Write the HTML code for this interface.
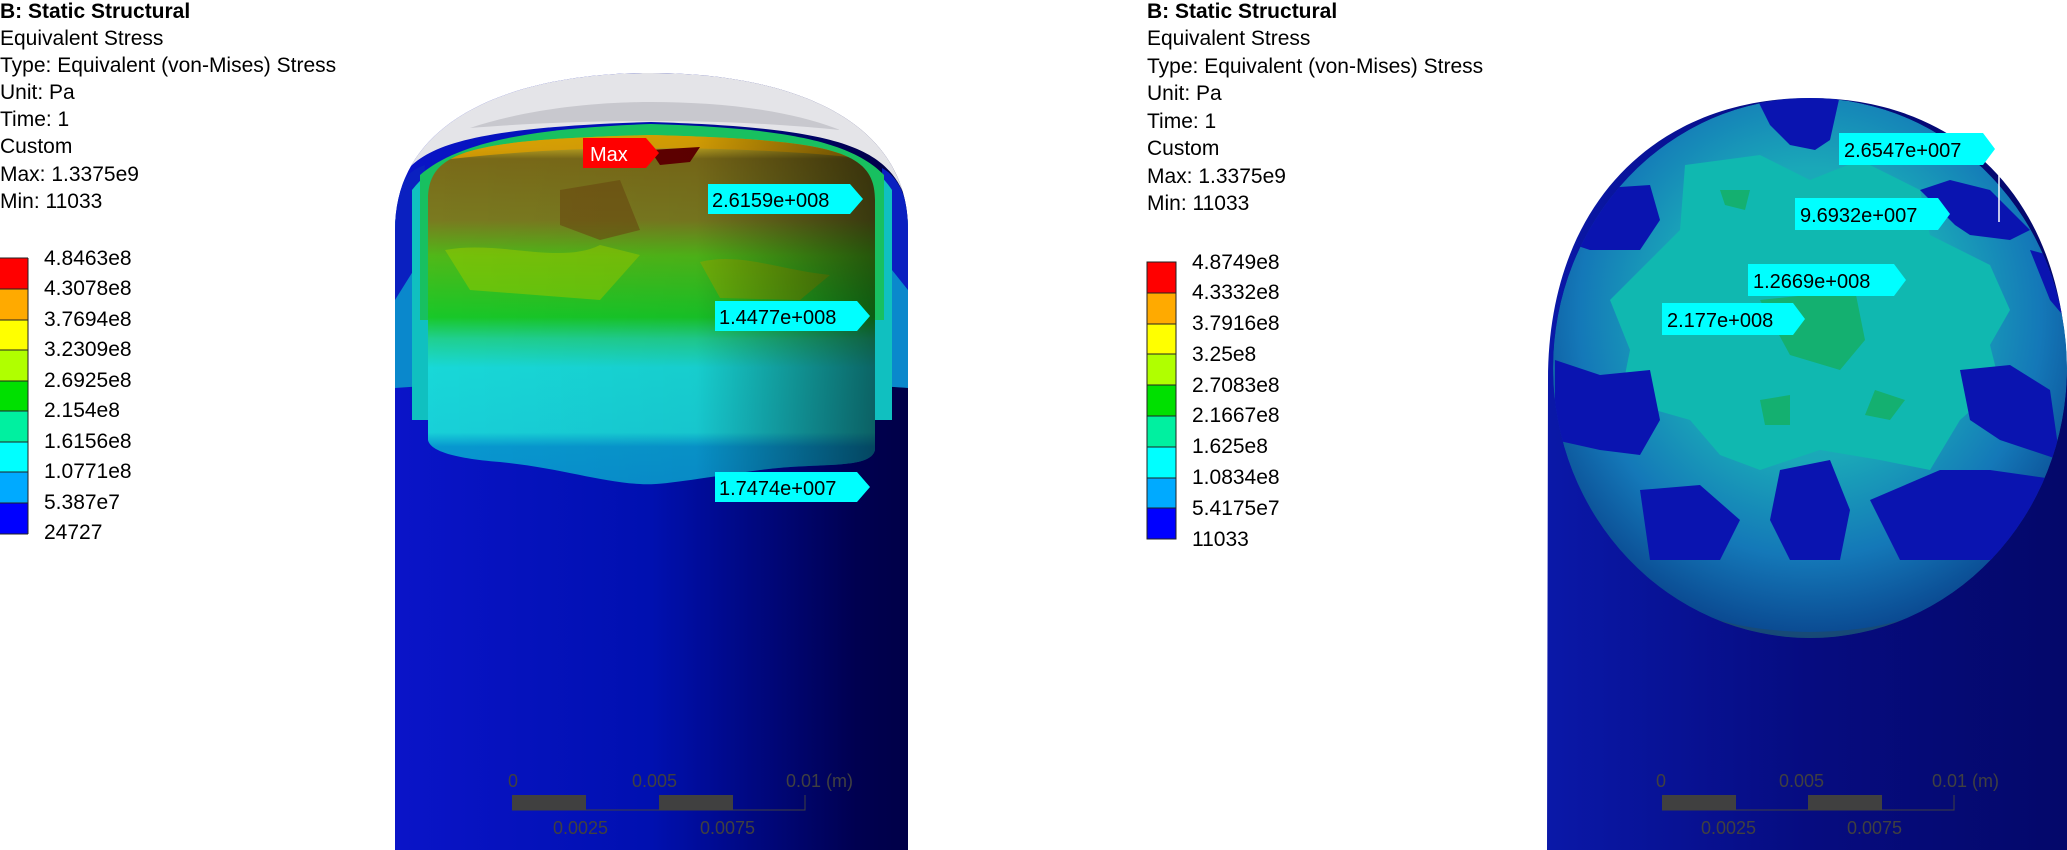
<!DOCTYPE html>
<html><head><meta charset="utf-8"><style>
html,body{margin:0;padding:0;background:#fff;width:2067px;height:850px;overflow:hidden}
svg{display:block}
text{font-family:"Liberation Sans",sans-serif}
</style></head><body>
<svg width="2067" height="850" viewBox="0 0 2067 850" xmlns="http://www.w3.org/2000/svg">
<defs>
<linearGradient id="cylL" x1="0" x2="1" y1="0" y2="0">
<stop offset="0" stop-color="#0a14c8"/><stop offset="0.5" stop-color="#0010b0"/><stop offset="0.9" stop-color="#000050"/><stop offset="1" stop-color="#000048"/>
</linearGradient>
<linearGradient id="shadeR" x1="0" x2="1" y1="0" y2="0">
<stop offset="0" stop-color="#000" stop-opacity="0"/><stop offset="0.6" stop-color="#000" stop-opacity="0.05"/><stop offset="1" stop-color="#000" stop-opacity="0.55"/>
</linearGradient>
<linearGradient id="innerL" x1="0" x2="0" y1="0" y2="1">
<stop offset="0" stop-color="#d0c000"/><stop offset="0.05" stop-color="#b8a020"/><stop offset="0.08" stop-color="#7a6a18"/>
<stop offset="0.25" stop-color="#7a7a20"/><stop offset="0.35" stop-color="#50b818"/><stop offset="0.52" stop-color="#18c828"/>
<stop offset="0.58" stop-color="#20d090"/><stop offset="0.66" stop-color="#18d8d8"/><stop offset="0.84" stop-color="#18d0d8"/>
<stop offset="0.88" stop-color="#0898d0"/><stop offset="1" stop-color="#0890d0"/>
</linearGradient>
<radialGradient id="domeR" cx="0.5" cy="0.4" r="0.6">
<stop offset="0" stop-color="#22b8b0"/><stop offset="0.45" stop-color="#1aa8b8"/><stop offset="0.75" stop-color="#1478b8"/><stop offset="1" stop-color="#0a4890"/>
</radialGradient>
<linearGradient id="cylR" x1="0" x2="1" y1="0" y2="0">
<stop offset="0" stop-color="#0a18a8"/><stop offset="0.5" stop-color="#060c80"/><stop offset="1" stop-color="#04086a"/>
</linearGradient>
<clipPath id="cl"><path d="M395,850 L395,230 C395,115 520,73 651,73 C782,73 908,115 908,230 L908,850 Z"/></clipPath>
<clipPath id="ci"><path d="M428,200 C428,150 470,140 651,135 C832,140 875,150 875,200 L875,450 C870,470 820,462 760,470 C700,478 660,486 640,484 C600,482 560,468 500,462 C450,458 430,450 428,440 Z"/></clipPath>
<clipPath id="cr"><ellipse cx="1810" cy="368" rx="257" ry="270"/></clipPath>
</defs>

<!-- LEFT TEXT -->
<g font-size="21" fill="#000">
<text x="0" y="18" font-weight="bold">B: Static Structural</text>
<text x="0" y="45">Equivalent Stress</text>
<text x="0" y="72">Type: Equivalent (von-Mises) Stress</text>
<text x="0" y="99">Unit: Pa</text>
<text x="0" y="126">Time: 1</text>
<text x="0" y="153">Custom</text>
<text x="0" y="181">Max: 1.3375e9</text>
<text x="0" y="208">Min: 11033</text>
</g>
<g>
<rect x="0" y="258" width="28" height="31" fill="#ff0000"/>
<rect x="0" y="289" width="28" height="31" fill="#ffaa00"/>
<rect x="0" y="320" width="28" height="30" fill="#ffff00"/>
<rect x="0" y="350" width="28" height="31" fill="#b0ff00"/>
<rect x="0" y="381" width="28" height="30" fill="#00e000"/>
<rect x="0" y="411" width="28" height="31" fill="#00f0a0"/>
<rect x="0" y="442" width="28" height="30" fill="#00ffff"/>
<rect x="0" y="472" width="28" height="31" fill="#00aaff"/>
<rect x="0" y="503" width="28" height="31" fill="#0000ff"/>
<path d="M0,289H28M0,320H28M0,350H28M0,381H28M0,411H28M0,442H28M0,472H28M0,503H28M28,258V534M0,258H28M0,534H28" stroke="#222" stroke-width="1" fill="none"/>
</g>
<g font-size="21" fill="#000">
<text x="44" y="265">4.8463e8</text><text x="44" y="295">4.3078e8</text><text x="44" y="326">3.7694e8</text>
<text x="44" y="356">3.2309e8</text><text x="44" y="387">2.6925e8</text><text x="44" y="417">2.154e8</text>
<text x="44" y="448">1.6156e8</text><text x="44" y="478">1.0771e8</text><text x="44" y="509">5.387e7</text>
<text x="44" y="539">24727</text>
</g>

<!-- LEFT MODEL -->
<g clip-path="url(#cl)">
<rect x="395" y="60" width="513" height="800" fill="url(#cylL)"/>
<path d="M395,220 C410,160 470,132 651,127 C830,132 890,160 908,220 L908,388 C800,380 500,380 395,388 Z" fill="#0a88cc"/>
<path d="M395,200 C400,180 410,170 425,165 L420,260 L395,300Z" fill="#0a20c0"/>
<path d="M908,215 C905,190 895,175 882,168 L884,260 L908,290Z" fill="#0a20c0"/>
<path d="M412,190 C450,142 520,130 651,125 C790,130 860,142 892,190 L892,420 L412,420Z" fill="#10c0c0"/>
<path d="M420,175 C460,140 540,128 651,124 C780,128 850,140 884,175 L884,320 L420,320Z" fill="#18c060"/>
<g clip-path="url(#ci)">
<rect x="420" y="130" width="460" height="360" fill="url(#innerL)"/>
<path d="M428,150 C520,138 600,134 651,134 C720,136 800,140 875,155 L875,160 C800,150 700,148 651,148 C580,148 500,152 428,162Z" fill="#e0a000" opacity="0.8"/>
<path d="M650,150 L700,147 L690,162 L660,165Z" fill="#600000"/>
<path d="M445,250 C500,240 560,265 600,245 L640,255 L600,300 L470,290Z" fill="#90c800" opacity="0.6"/>
<path d="M700,262 C740,252 780,270 830,275 L800,300 L720,298Z" fill="#90b000" opacity="0.6"/>
<path d="M560,190 L620,180 L640,230 L600,240 L560,225Z" fill="#6a4a10" opacity="0.6"/>
<rect x="420" y="120" width="460" height="380" fill="url(#shadeR)"/>
</g>
<!-- gray cap -->
<path d="M395,190 C405,100 520,73 651,73 C782,73 900,100 908,205 C890,150 850,128 651,122 C450,128 412,150 395,190Z" fill="#e4e4e8"/>
<path d="M470,128 C530,108 600,102 651,102 C720,102 790,110 840,130 C780,124 720,121 651,121 C580,121 520,124 470,128Z" fill="#c8c8ce"/>
</g>
<!-- left labels -->
<polygon points="583,138 646,138 659,153 646,168 583,168" fill="#ff0000"/>
<text x="590" y="161" font-size="20" fill="#fff">Max</text>
<polygon points="708,184 850,184 863,199 850,214 708,214" fill="#00ffff"/>
<text x="712" y="207" font-size="20" fill="#000">2.6159e+008</text>
<polygon points="715,301 857,301 870,316 857,331 715,331" fill="#00ffff"/>
<text x="719" y="324" font-size="20" fill="#000">1.4477e+008</text>
<polygon points="715,472 857,472 870,487 857,502 715,502" fill="#00ffff"/>
<text x="719" y="495" font-size="20" fill="#000">1.7474e+007</text>
<!-- left scale -->
<g font-size="18" fill="#404040">
<text x="508" y="787">0</text><text x="632" y="787">0.005</text><text x="786" y="787">0.01 (m)</text>
<text x="553" y="834">0.0025</text><text x="700" y="834">0.0075</text>
</g>
<rect x="512" y="795" width="74" height="15" fill="#404040"/>
<rect x="659" y="795" width="74" height="15" fill="#404040"/>
<path d="M512,810 H805 V795" stroke="#404040" stroke-width="1" fill="none"/>

<!-- RIGHT TEXT -->
<g font-size="21" fill="#000">
<text x="1147" y="18" font-weight="bold">B: Static Structural</text>
<text x="1147" y="45">Equivalent Stress</text>
<text x="1147" y="73">Type: Equivalent (von-Mises) Stress</text>
<text x="1147" y="100">Unit: Pa</text>
<text x="1147" y="128">Time: 1</text>
<text x="1147" y="155">Custom</text>
<text x="1147" y="183">Max: 1.3375e9</text>
<text x="1147" y="210">Min: 11033</text>
</g>
<g>
<rect x="1147" y="262" width="29" height="31" fill="#ff0000"/>
<rect x="1147" y="293" width="29" height="31" fill="#ffaa00"/>
<rect x="1147" y="324" width="29" height="30" fill="#ffff00"/>
<rect x="1147" y="354" width="29" height="31" fill="#b0ff00"/>
<rect x="1147" y="385" width="29" height="31" fill="#00e000"/>
<rect x="1147" y="416" width="29" height="31" fill="#00f0a0"/>
<rect x="1147" y="447" width="29" height="31" fill="#00ffff"/>
<rect x="1147" y="478" width="29" height="30" fill="#00aaff"/>
<rect x="1147" y="508" width="29" height="31" fill="#0000ff"/>
<path d="M1147,293h29M1147,324h29M1147,354h29M1147,385h29M1147,416h29M1147,447h29M1147,478h29M1147,508h29M1147,262h29v277h-29z" stroke="#222" stroke-width="1" fill="none"/>
</g>
<g font-size="21" fill="#000">
<text x="1192" y="269">4.8749e8</text><text x="1192" y="299">4.3332e8</text><text x="1192" y="330">3.7916e8</text>
<text x="1192" y="361">3.25e8</text><text x="1192" y="392">2.7083e8</text><text x="1192" y="422">2.1667e8</text>
<text x="1192" y="453">1.625e8</text><text x="1192" y="484">1.0834e8</text><text x="1192" y="515">5.4175e7</text>
<text x="1192" y="546">11033</text>
</g>

<!-- RIGHT MODEL -->
<path d="M1547,850 L1548,380 C1548,200 1660,98 1810,98 C1960,98 2067,200 2067,380 L2067,850 Z" fill="url(#cylR)"/>
<g clip-path="url(#cr)">
<ellipse cx="1810" cy="368" rx="257" ry="270" fill="url(#domeR)"/>
<path d="M1560,450 C1620,600 1700,630 1810,632 C1920,630 2000,600 2060,450 L2067,650 L1550,650Z" fill="#1a4a70" opacity="0.8"/>
<path d="M1685,165 L1760,155 L1810,180 L1860,160 L1920,190 L1930,235 L1990,265 L2010,310 L1990,345 L2000,385 L1960,420 L1930,470 L1880,460 L1820,450 L1760,470 L1720,455 L1690,420 L1620,400 L1630,350 L1610,300 L1650,260 L1680,230Z" fill="#10b8b0"/>
<path d="M1760,300 L1855,290 L1865,340 L1840,370 L1790,355Z" fill="#14b070"/>
<path d="M1720,190 L1750,190 L1745,210 L1725,205Z" fill="#14b070"/>
<path d="M1760,400 L1790,395 L1790,425 L1765,425Z" fill="#14b070"/>
<path d="M1875,390 L1905,400 L1890,420 L1865,415Z" fill="#14b070"/>
<g fill="#0a14b0">
<path d="M1755,95 L1840,95 L1830,140 L1815,150 L1790,145 L1770,125Z"/>
<path d="M1920,190 L1950,180 L1990,190 L2030,230 L2010,240 L1970,235 L1955,225Z"/>
<path d="M1575,190 L1650,185 L1660,220 L1640,250 L1590,250 L1560,240Z"/>
<path d="M1555,360 L1600,375 L1650,370 L1660,420 L1640,455 L1600,450 L1555,440Z"/>
<path d="M1960,370 L2010,365 L2050,390 L2060,460 L2000,440 L1970,420Z"/>
<path d="M1780,470 L1830,460 L1850,510 L1840,560 L1790,560 L1770,520Z"/>
<path d="M1870,500 L1940,470 L1990,470 L2060,480 L2060,560 L1900,560Z"/>
<path d="M1640,490 L1700,485 L1740,520 L1720,560 L1650,560Z"/>
<path d="M2030,250 L2067,260 L2067,320 L2050,300Z"/>
</g>
<path d="M1560,550 C1650,620 1720,640 1810,640 C1900,640 1970,620 2060,550 L2067,650 L1550,650Z" fill="#0a2a70"/>
</g>
<!-- right labels -->
<polygon points="1839,133 1983,133 1995,149 1983,165 1839,165" fill="#00ffff"/>
<text x="1844" y="157" font-size="20" fill="#000">2.6547e+007</text>
<line x1="1999" y1="165" x2="1999" y2="222" stroke="#fff" stroke-width="1.5"/>
<polygon points="1795,198 1938,198 1950,214 1938,230 1795,230" fill="#00ffff"/>
<text x="1800" y="222" font-size="20" fill="#000">9.6932e+007</text>
<polygon points="1748,264 1894,264 1906,280 1894,296 1748,296" fill="#00ffff"/>
<text x="1753" y="288" font-size="20" fill="#000">1.2669e+008</text>
<polygon points="1662,303 1793,303 1805,319 1793,335 1662,335" fill="#00ffff"/>
<text x="1667" y="327" font-size="20" fill="#000">2.177e+008</text>
<!-- right scale -->
<g font-size="18" fill="#404040">
<text x="1656" y="787">0</text><text x="1779" y="787">0.005</text><text x="1932" y="787">0.01 (m)</text>
<text x="1701" y="834">0.0025</text><text x="1847" y="834">0.0075</text>
</g>
<rect x="1662" y="795" width="74" height="15" fill="#404040"/>
<rect x="1808" y="795" width="74" height="15" fill="#404040"/>
<path d="M1662,810 H1954 V795" stroke="#404040" stroke-width="1" fill="none"/>
</svg>
</body></html>
